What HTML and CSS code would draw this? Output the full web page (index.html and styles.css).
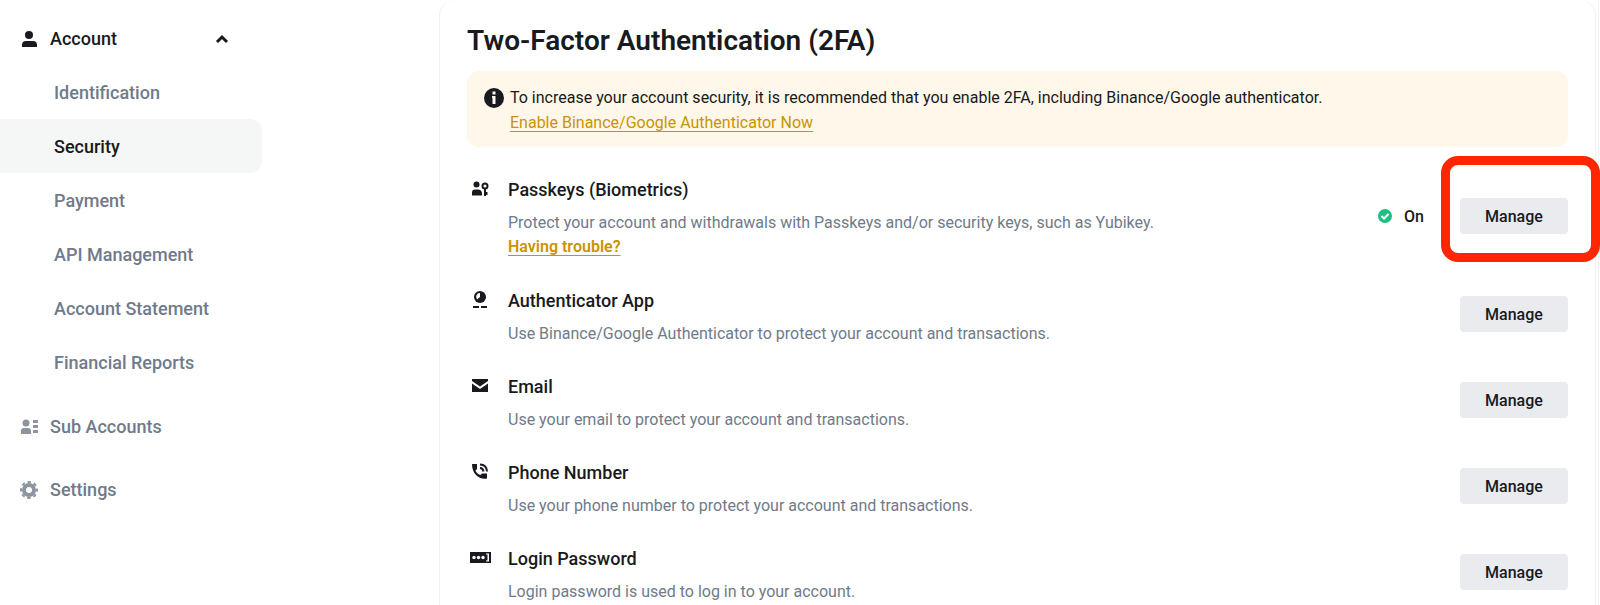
FILE: index.html
```html
<!DOCTYPE html>
<html lang="en">
	<head>
		<meta charset="UTF-8">
		<title>Security</title>
		<link rel="stylesheet" href="styles.css">
	</head>
	<body>
		<div id="page">
			<nav id="side">
				<button type="button" class="group open">
					<svg width="18" height="18" viewBox="0 0 18 18"><circle cx="9" cy="5" r="4"/><path d="M2 17v-2q0-4 4-4h7q4 0 4 4v2z"/></svg>
					<span>Account</span>
					<svg class="arrow" width="14" height="10" viewBox="0 0 14 10"><path d="M2 8l5-5 5 5" fill="none" stroke="#181a20" stroke-width="3"/></svg>
				</button>
				<ul>
					<li><a href="#">Identification</a></li>
					<li><a href="#" class="on">Security</a></li>
					<li><a href="#">Payment</a></li>
					<li><a href="#">API Management</a></li>
					<li><a href="#">Account Statement</a></li>
					<li><a href="#">Financial Reports</a></li>
				</ul>
				<a href="#" class="group">
					<svg width="18" height="18" viewBox="0 0 18 18"><circle cx="6" cy="5" r="3.500"/><path d="M1 16v-3q0-3 3-3h4q3 0 3 3v3z"/><path d="M13 2h5v3h-5zM13 7h5v3h-5zM13 12h5v3h-5z"/></svg>
					<span>Sub Accounts</span>
				</a>
				<a href="#" class="group">
					<svg width="18" height="18" viewBox="0 0 18 18"><circle cx="9" cy="9" r="5" fill="none" stroke="#8d94a0" stroke-width="4"/><circle cx="9" cy="9" r="8" fill="none" stroke="#8d94a0" stroke-width="2" stroke-dasharray="3.4 2.88" stroke-dashoffset="1.7"/></svg>
					<span>Settings</span>
				</a>
			</nav>
			<main id="panel">
				<h1>Two-Factor Authentication (2FA)</h1>
				<div class="notice">
					<svg width="20" height="20" viewBox="0 0 20 20"><circle cx="10" cy="10" r="10"/><path d="M8.500 3.500h3v3h-3zM8 8h3.500v8h-3v-6H8z" fill="#fef7ea"/></svg>
					<p>To increase your account security, it is recommended that you enable 2FA, including Binance/Google authenticator.<br><a href="#">Enable Binance/Google Authenticator Now</a></p>
				</div>
				<section class="row tall">
					<svg width="22" height="18" viewBox="0 0 22 18"><circle cx="7.500" cy="4.500" r="3"/><path d="M3 15.500v-3q0-3 3-3h3q3 0 4 3v3z"/><circle cx="16" cy="6" r="2.500" fill="none" stroke="#181a20" stroke-width="2"/><path d="M15 8h2v8h-2zM17 12h1.500v3H17z"/></svg>
					<div class="text">
						<h2>Passkeys (Biometrics)</h2>
						<p>Protect your account and withdrawals with Passkeys and/or security keys, such as Yubikey.<br><a href="#">Having trouble?</a></p>
					</div>
					<div class="status">
						<svg width="14" height="14" viewBox="0 0 14 14"><circle cx="7" cy="7" r="7" fill="#1fbf83"/><path d="M3.500 7l2.500 2.500 4.500-4.500" fill="none" stroke="#fff" stroke-width="2"/></svg>
						<span>On</span>
					</div>
					<div class="marked"><button type="button">Manage</button></div>
				</section>
				<section class="row">
					<svg width="22" height="18" viewBox="0 0 22 18"><circle cx="11" cy="6" r="6"/><path d="M11 2.500V6L8 8.500A4 4 0 0 1 11 2z" fill="#fff"/><path d="M4 15h6v2H4zM12 15h6v2h-6z"/></svg>
					<div class="text">
						<h2>Authenticator App</h2>
						<p>Use Binance/Google Authenticator to protect your account and transactions.</p>
					</div>
					<button type="button">Manage</button>
				</section>
				<section class="row">
					<svg width="22" height="18" viewBox="0 0 22 18"><path d="M3 2h16v2l-8 5.500L3 4z"/><path d="M3 6.500l8 5.500 8-5.500V15H3z"/></svg>
					<div class="text">
						<h2>Email</h2>
						<p>Use your email to protect your account and transactions.</p>
					</div>
					<button type="button">Manage</button>
				</section>
				<section class="row">
					<svg width="22" height="18" viewBox="0 0 22 18"><path d="M3 1h5v5L6.500 7.500q1 3 5 4.500l1.500-1.500h5v5q-7 1-11-3.500Q3 8 3 1z"/><path d="M11 5q3 0 3.500 3.500M11 1.500q6.500 0 7 7" fill="none" stroke="#181a20" stroke-width="2"/></svg>
					<div class="text">
						<h2>Phone Number</h2>
						<p>Use your phone number to protect your account and transactions.</p>
					</div>
					<button type="button">Manage</button>
				</section>
				<section class="row">
					<svg width="22" height="18" viewBox="0 0 22 18"><path d="M1 3h21v11H1z"/><g fill="#fff"><circle cx="5" cy="8.500" r="1.700"/><circle cx="9.500" cy="8.500" r="1.700"/><circle cx="14" cy="8.500" r="1.700"/><path d="M17 4.500h3v8h-3v-1h1.500v-6H17z"/></g></svg>
					<div class="text">
						<h2>Login Password</h2>
						<p>Login password is used to log in to your account.</p>
					</div>
					<button type="button">Manage</button>
				</section>
			</main>
		</div>
	</body>
</html>
```
FILE: styles.css
```css
*{
	margin: 0;
	padding: 0;
	box-sizing: border-box;
}
body{
	font-family: Roboto, "Liberation Sans", sans-serif;
	font-size: 16px;
	color: #181a20;
	background: #fff;
}
ul,li{
	list-style: none;
}
svg{
	display: block;
	flex: none;
	fill: #181a20;
}
#page{
	display: flex;
	min-height: 100vh;
	margin-right: 1px;
	padding-right: 2px;
	border-right: 1px solid #f3f4f6;
}

/* left menu */
#side{
	width: 262px;
	flex: none;
	margin-right: 177px;
	font-size: 18px;
	font-weight: 500;
}
#side .group{
	display: flex;
	align-items: center;
	gap: 12px;
	width: 100%;
	height: 63px;
	padding-left: 20px;
	font: inherit;
	color: #707a8a;
	text-decoration: none;
}
#side .group svg{
	fill: #8d94a0;
}
#side .open{
	height: 65px;
	padding-top: 12px;
	border: none;
	background: none;
	color: #181a20;
}
#side .open svg{
	fill: #181a20;
}
#side .arrow{
	margin-left: auto;
	margin-right: 33px;
}
#side ul{
	padding-bottom: 6px;
}
#side li a{
	display: block;
	height: 54px;
	padding-left: 54px;
	line-height: 56px;
	border-radius: 0 12px 12px 0;
	color: #707a8a;
	text-decoration: none;
}
#side li .on{
	color: #181a20;
	background: #f5f6f6;
}

/* right panel */
#panel{
	flex: 1;
	min-width: 0;
	padding: 23px 27px 0;
	border: 1px solid #eff0f2;
	border-width: 0 1px;
	border-radius: 16px 16px 0 0;
}
h1{
	font-size: 28px;
	font-weight: 600;
	line-height: 36px;
}
.notice{
	display: flex;
	gap: 6px;
	margin-top: 12px;
	padding: 14px 17px 12px;
	border-radius: 12px;
	background: #fef7ea;
	line-height: 25px;
}
.notice svg{
	margin-top: 3px;
}
a{
	color: #c99400;
	text-underline-offset: 3px;
}
.row{
	display: flex;
	height: 86px;
}
.row > svg{
	margin: 15px 17px 0 2px;
}
.row:last-child{
	height: auto;
}
.text{
	flex: 1;
	padding-top: 12px;
}
.row h2{
	font-size: 18px;
	font-weight: 500;
	line-height: 26px;
}
.row p{
	margin-top: 8px;
	line-height: 24px;
	color: #707a8a;
}
.row p a{
	font-weight: 600;
}
.row button{
	width: 108px;
	height: 36px;
	margin-top: 20px;
	border: none;
	border-radius: 4px;
	background: #eaebef;
	font: 500 16px Roboto, "Liberation Sans", sans-serif;
	color: #181a20;
}
.tall{
	height: 111px;
	margin-top: 18px;
}
.status{
	display: flex;
	align-items: center;
	gap: 12px;
	height: 36px;
	margin: 33px 36px 0 0;
	font-weight: 500;
}

/* red frame round the button */
.marked{
	position: relative;
	height: 36px;
	margin-top: 33px;
}
.marked button{
	margin-top: 0;
}
.marked:after{
	content: "";
	position: absolute;
	top: -42px;
	right: -32px;
	bottom: -28px;
	left: -19px;
	border: 9px solid #ff2600;
	border-radius: 17px;
	pointer-events: none;
}
```
